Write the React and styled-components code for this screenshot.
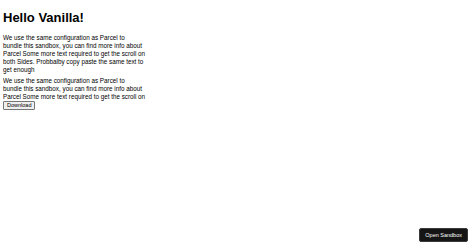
import React from "react";
import styled, { createGlobalStyle } from "styled-components";

const Global = createGlobalStyle`
  html, body {
    margin: 0;
    padding: 0;
    background: #fff;
  }
  body {
    font-family: "Liberation Sans", Arial, sans-serif;
    color: #000;
  }
`;

const Page = styled.div`
  position: relative;
  width: 474px;
  height: 248px;
  padding: 3px;
  box-sizing: border-box;
  overflow: hidden;
`;

const Title = styled.h1`
  font-size: 13px;
  font-weight: bold;
  margin: 7px 0 9px;
  line-height: 15px;
`;

const Text = styled.p`
  width: 142.3px;
  font-size: 6.3px;
  line-height: 8px;
  margin: 0 0 ${p => (p.$last ? 0 : 3)}px;
`;

const Clip = styled.div`
  height: 24px;
  overflow: hidden;
`;

const Download = styled.button`
  display: block;
  font-family: "Liberation Sans", Arial, sans-serif;
  font-size: 5.5px;
  padding: 0 3px;
  margin: 0;
  height: 9px;
  line-height: 7px;
  border: 1px solid #767676;
  border-radius: 1px;
  background: #efefef;
  color: #000;
`;

const SandboxButton = styled.button`
  position: absolute;
  right: 6px;
  bottom: 6px;
  height: 14px;
  padding: 0 5px;
  font-family: "Liberation Sans", Arial, sans-serif;
  font-size: 5.5px;
  color: #fff;
  background: #151515;
  border: 1px solid #3a3a3a;
  border-radius: 2px;
`;

const copy =
  "We use the same configuration as Parcel to bundle this sandbox, you can find more info about Parcel Some more text required to get the scroll on both Sides. Probbalby copy paste the same text to get enough";

export default function App() {
  return (
    <Page>
      <Global />
      <Title>Hello Vanilla!</Title>
      <Text>{copy}</Text>
      <Clip>
        <Text $last>{copy}</Text>
      </Clip>
      <Download>Download</Download>
      <SandboxButton>Open Sandbox</SandboxButton>
    </Page>
  );
}
